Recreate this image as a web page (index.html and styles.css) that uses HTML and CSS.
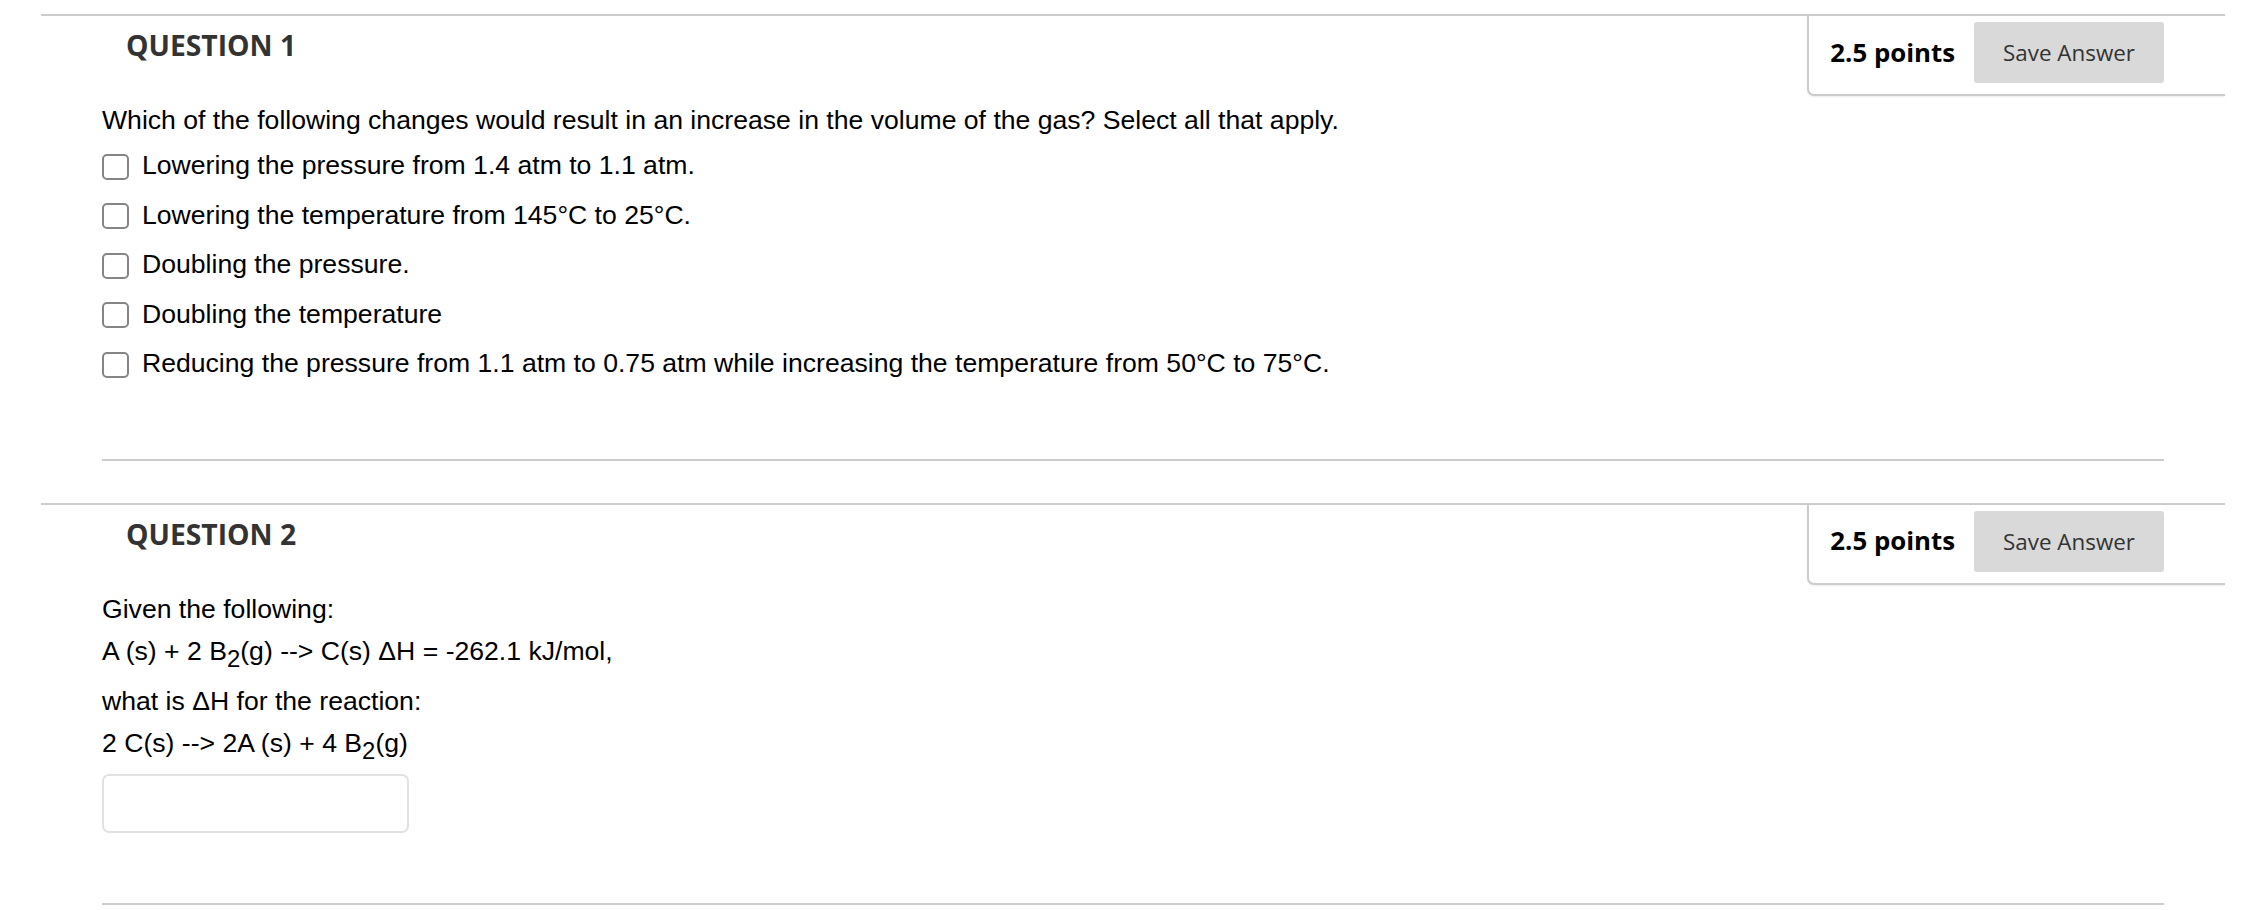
FILE: index.html
```html
<!DOCTYPE html>
<html>
<head>
<meta charset="utf-8">
<title>Test</title>
<link rel="stylesheet" href="styles.css">
</head>
<body>
  <div class="question">
    <div class="q-header">
      <h3 class="q-title">QUESTION 1</h3>
      <div class="points-box">
        <span class="points">2.5 points</span>
        <button class="save-btn">Save Answer</button>
      </div>
    </div>
    <div class="q-body">
      <p class="q-text">Which of the following changes would result in an increase in the volume of the gas? Select all that apply.</p>
      <ul class="options">
        <li class="option"><span class="checkbox"></span><span>Lowering the pressure from 1.4 atm to 1.1 atm.</span></li>
        <li class="option"><span class="checkbox"></span><span>Lowering the temperature from 145°C to 25°C.</span></li>
        <li class="option"><span class="checkbox"></span><span>Doubling the pressure.</span></li>
        <li class="option"><span class="checkbox"></span><span>Doubling the temperature</span></li>
        <li class="option"><span class="checkbox"></span><span>Reducing the pressure from 1.1 atm to 0.75 atm while increasing the temperature from 50°C to 75°C.</span></li>
      </ul>
      <div class="divider divider-q1"></div>
    </div>
  </div>

  <div class="question">
    <div class="q-header">
      <h3 class="q-title">QUESTION 2</h3>
      <div class="points-box">
        <span class="points">2.5 points</span>
        <button class="save-btn">Save Answer</button>
      </div>
    </div>
    <div class="q-body">
      <p class="q-text">Given the following:<br>A (s) + 2 B<sub>2</sub>(g) --&gt; C(s) ΔH = -262.1 kJ/mol,</p>
      <p class="q-text q-text-next">what is ΔH for the reaction:<br>2 C(s) --&gt; 2A (s) + 4 B<sub>2</sub>(g)</p>
      <div class="answer-input"></div>
      <div class="divider divider-q2"></div>
    </div>
  </div>
</body>
</html>
```

FILE: styles.css
```css
html, body {
  background: #ffffff;
}

body {
  margin: 14px 27px 0 41px;
  font-family: "Liberation Sans", Arial, Helvetica, sans-serif;
  color: #000;
}

.question + .question {
  margin-top: 42px;
}

.q-header {
  display: flex;
  justify-content: space-between;
  align-items: flex-start;
  border-top: 2px solid #cccccc;
}

.q-title {
  margin: 0;
  padding: 9px 0 0 85px;
  font-family: "Open Sans", "Liberation Sans", sans-serif;
  font-weight: 700;
  font-size: 28.3px;
  line-height: 40px;
  color: #333333;
}

.points-box {
  display: flex;
  align-items: center;
  gap: 19px;
  padding: 6px 61px 11px 21px;
  border-left: 2px solid #cccccc;
  border-bottom: 2px solid #cccccc;
  border-bottom-left-radius: 7px;
  box-shadow: 0 1px 2px rgba(0, 0, 0, 0.08);
  background: #ffffff;
}

.points {
  font-family: "Open Sans", "Liberation Sans", sans-serif;
  font-weight: 700;
  font-size: 25.8px;
  color: #000;
  line-height: 36px;
  position: relative;
  top: -1px;
}

.save-btn {
  height: 61px;
  padding: 0 29px;
  border: none;
  border-radius: 3px;
  background: #d9d9d9;
  font-family: "Open Sans", "Liberation Sans", sans-serif;
  font-size: 22.4px;
  color: #333333;
  cursor: pointer;
}

.q-body {
  padding: 0 61px;
}

.q-text {
  margin: 3px 0 0 0;
  font-size: 26.6px;
  line-height: 42px;
}

.q-text-next {
  margin-top: 8px;
}

sub {
  font-size: 0.9em;
  vertical-align: -0.28em;
  line-height: 0;
}

.options {
  list-style: none;
  margin: 0;
  padding: 0;
}

.option {
  display: flex;
  align-items: center;
  gap: 13px;
  font-size: 26.6px;
  line-height: 49.5px;
}

.checkbox {
  box-sizing: border-box;
  width: 27px;
  height: 26px;
  border: 2px solid #858585;
  border-radius: 5px;
  background: #fff;
  flex: none;
  position: relative;
  top: 1px;
}

.divider {
  height: 0;
  border-top: 2px solid #cccccc;
}

.divider-q1 {
  margin-top: 70px;
}

.answer-input {
  box-sizing: border-box;
  width: 307px;
  height: 59px;
  margin-top: 10px;
  border: 2px solid #e2e2e2;
  border-radius: 7px;
  background: #fff;
}

.divider-q2 {
  margin-top: 70px;
}
```
